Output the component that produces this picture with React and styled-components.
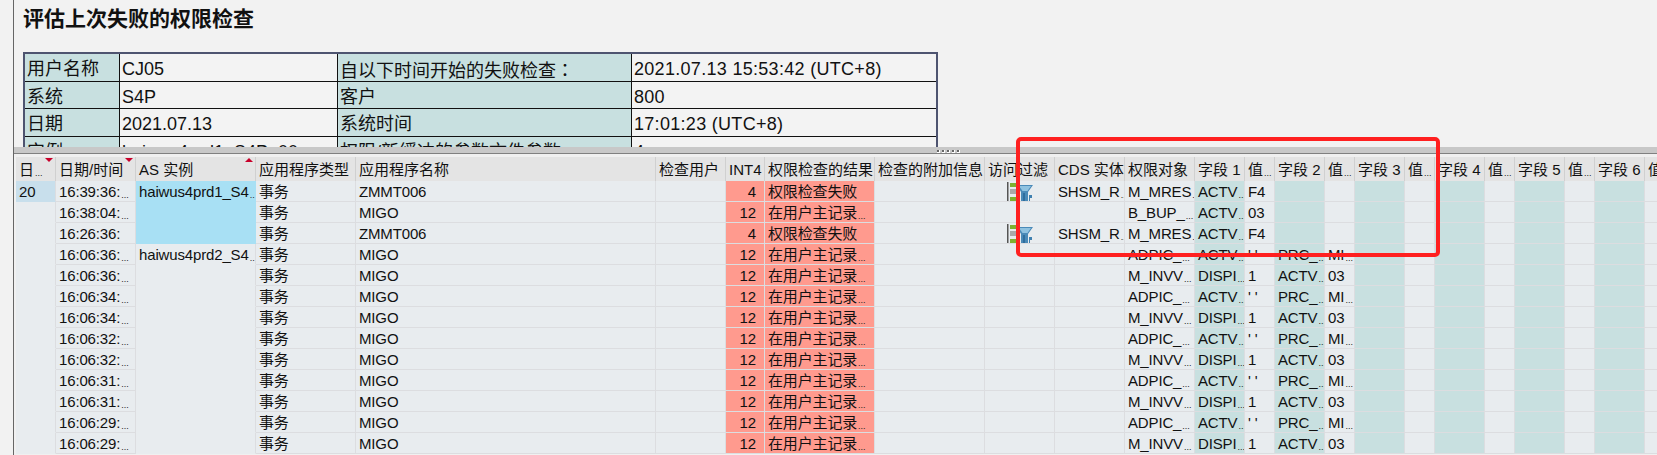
import React from 'react';
import styled, { createGlobalStyle } from 'styled-components';

const Global = createGlobalStyle`
  html, body { margin: 0; padding: 0; background: #f2f2f2; overflow: hidden; }
  body { font-family: "Liberation Sans", "Noto Sans CJK SC", sans-serif; color: #111; }
`;

const Page = styled.div`
  position: relative;
  width: 1657px;
  height: 455px;
  overflow: hidden;
  background: #f2f2f2;
  padding-left: 13px;
  box-sizing: border-box;
`;
const Frame = styled.div`
  height: 100%;
  border-left: 1px solid #666;
  display: flex;
  flex-direction: column;
`;
const TopPanel = styled.section`
  height: 147px;
  flex: none;
  overflow: hidden;
  padding-left: 9px;
`;
const Title = styled.h1`
  margin: 0;
  height: 52px;
  padding-top: 5px;
  box-sizing: border-box;
  font-size: 21px;
  line-height: 27px;
  font-weight: 700;
  color: #111;
`;
const InfoGrid = styled.div`
  display: grid;
  width: 915px;
  box-sizing: border-box;
  grid-template-columns: 95px 218px 294px 304px;
  grid-auto-rows: 27.5px;
  border: 2px solid #4e5470;
  border-bottom: 0;
`;
const InfoCell = styled.div`
  background: ${p => (p.$label ? '#c8e0e0' : '#f3f3f3')};
  border-bottom: 1px solid #111;
  border-right: ${p => (p.$last ? 0 : '1px solid #111')};
  padding: 3px 0 0 2px;
  box-sizing: border-box;
  font-size: 18px;
  line-height: 25px;
  letter-spacing: ${p => (p.$last ? '0.3px' : '0')};
  white-space: nowrap;
  overflow: hidden;
`;
const WideColon = styled.span`
  font-family: "Noto Sans CJK TC", sans-serif;
`;
const Splitter = styled.div`
  position: relative;
  flex: none;
  height: 6px;
  background: #c8c8c8;
  border-bottom: 1px solid #808080;
`;
const Grip = styled.div`
  position: absolute;
  left: 923px;
  top: 3px;
  display: flex;
  gap: 2px;
`;
const GripDot = styled.i`
  width: 2px;
  height: 2px;
  background: #666;
  border-right: 1px solid #fff;
  border-bottom: 1px solid #fff;
`;
const TableWrap = styled.section`
  flex: 1;
  overflow: hidden;
  padding: 3px 0 0 2px;
  background: #f0f0f0;
`;
const Table = styled.div`
  display: grid;
  grid-template-columns: 40px 80px 120px 100px 300px 70px 39px 110px 110px 70px 70px 70px 50px 30px 50px 30px 50px 30px 50px 30px 50px 30px 50px 30px 30px;
  grid-template-rows: 24px;
  grid-auto-rows: 21px;
  background: #e8ecef;
  width: max-content;
`;
const Head = styled.div`
  position: relative;
  background: #e4e4e4;
  border-right: 1px solid #d0d0d0;
  padding-left: 3px;
  font-size: 15px;
  line-height: 26px;
  white-space: nowrap;
  overflow: hidden;
  box-sizing: border-box;
`;
const Sort = styled.i`
  position: absolute;
  top: 1px;
  right: 2px;
  width: 0;
  height: 0;
  border-left: 4px solid transparent;
  border-right: 4px solid transparent;
  ${p => (p.$up ? 'border-bottom: 4px solid #c8002a;' : 'border-top: 4px solid #c8002a;')}
`;
const tones = { plain: '#e8ecef', pink: '#ff9a8e', teal: '#c8e0e0', sky: '#a8e0f4', pale: '#c8dfec' };
const Cell = styled.div`
  background: ${p => tones[p.$tone || 'plain']};
  border-right: 1px solid ${p => (p.$tone === 'sky' ? '#a8e0f4' : '#dcdde0')};
  border-bottom: 1px solid ${p => (p.$open ? 'transparent' : '#dcdde0')};
  padding: 0 ${p => (p.$right ? '8px' : '0')} 0 3px;
  text-align: ${p => (p.$right ? 'right' : 'left')};
  font-size: 15px;
  line-height: 21px;
  letter-spacing: -0.15px;
  white-space: nowrap;
  overflow: hidden;
  box-sizing: border-box;
`;
const Dots = styled.span`
  position: relative;
  top: 1px;
  margin-left: 1px;
  font-size: 9px;
  letter-spacing: 0;
  color: #222;
`;
const IconCell = styled(Cell)`
  display: flex;
  justify-content: center;
  align-items: flex-start;
  padding: 1px 0 0;
`;
const Annotation = styled.div`
  position: absolute;
  left: 1016px;
  top: 137px;
  width: 424px;
  height: 120px;
  box-sizing: border-box;
  border: 4px solid #ff2020;
  border-radius: 5px;
  pointer-events: none;
`;

const FilterIcon = () => (
  <svg width="26" height="20" viewBox="0 0 26 20">
    <rect x="0" y="0" width="1.5" height="20" fill="#555" />
    <rect x="3" y="1" width="9" height="4" fill="#7fb02f" />
    <rect x="3" y="7" width="8" height="5" fill="#a9a9a9" />
    <rect x="3" y="15" width="9" height="4" fill="#7fb02f" />
    <path d="M10 3H26L21 10V20H14V10Z" fill="#4a8ab8" />
    <path d="M12 4H24L20.5 9H15.5Z" fill="#8fc2e0" />
    <rect x="16" y="11" width="2" height="8" fill="#2f6e9e" />
    <path d="M22 13H25V16H23V19H22Z" fill="#3f80b0" />
  </svg>
);

const T = ({ tone, open, right, text, more }) => (
  <Cell $tone={tone} $open={open} $right={right}>
    {text}
    {more && <Dots>...</Dots>}
  </Cell>
);

const heads = [
  ['日', 'down', true], ['日期/时间', 'down'], ['AS 实例', 'up'], ['应用程序类型'], ['应用程序名称'], ['检查用户'], ['INT4'],
  ['权限检查的结果'], ['检查的附加信息'], ['访问过滤'], ['CDS 实体'], ['权限对象'],
  ['字段 1'], ['值', null, true], ['字段 2'], ['值', null, true], ['字段 3'], ['值', null, true],
  ['字段 4'], ['值', null, true], ['字段 5'], ['值', null, true], ['字段 6'], ['值', null, true], ['值', null, true],
];

const fail = { code: 4, result: '权限检查失败', more: false };
const rec = { code: 12, result: '在用户主记录', more: true };

const rows = [
  { date: '20', time: '16:39:36:', as: 'haiwus4prd1_S4', asTone: 'sky', type: 'ZMMT006', ...fail, icon: true, cds: 'SHSM_R', obj: 'M_MRES', f1: 'ACTV', v1: 'F4' },
  { time: '16:38:04:', asTone: 'sky', type: 'MIGO', ...rec, obj: 'B_BUP_', f1: 'ACTV', v1: '03' },
  { time: '16:26:36:', asTone: 'sky', type: 'ZMMT006', ...fail, icon: true, cds: 'SHSM_R', obj: 'M_MRES', f1: 'ACTV', v1: 'F4' },
  { time: '16:06:36:', as: 'haiwus4prd2_S4', type: 'MIGO', ...rec, obj: 'ADPIC_', f1: 'ACTV', v1: "' '", f2: 'PRC_', v2: 'MI' },
  ...['36', '34', '34', '32', '32', '31', '31', '29', '29'].map((s, i) => (
    i % 2 === 0
      ? { time: `16:06:${s}:`, type: 'MIGO', ...rec, obj: 'M_INVV', f1: 'DISPI', v1: '1', f2: 'ACTV', v2: '03' }
      : { time: `16:06:${s}:`, type: 'MIGO', ...rec, obj: 'ADPIC_', f1: 'ACTV', v1: "' '", f2: 'PRC_', v2: 'MI' }
  )),
];

const info = [
  ['用户名称', 'CJ05', <>自以下时间开始的失败检查<WideColon>：</WideColon></>, '2021.07.13 15:53:42 (UTC+8)'],
  ['系统', 'S4P', '客户', '800'],
  ['日期', '2021.07.13', '系统时间', '17:01:23 (UTC+8)'],
  ['实例', 'haiwus4prd1_S4P_00', '权限/新缓冲的参数文件参数', '4'],
];

export default function App() {
  return (
    <Page>
      <Global />
      <Frame>
        <TopPanel>
          <Title>评估上次失败的权限检查</Title>
          <InfoGrid>
            {info.map(r => (
              <React.Fragment key={r[0]}>
                <InfoCell $label>{r[0]}</InfoCell>
                <InfoCell>{r[1]}</InfoCell>
                <InfoCell $label>{r[2]}</InfoCell>
                <InfoCell $last>{r[3]}</InfoCell>
              </React.Fragment>
            ))}
          </InfoGrid>
        </TopPanel>
        <Splitter>
          <Grip>{[0, 1, 2, 3, 4].map(i => <GripDot key={i} />)}</Grip>
        </Splitter>
        <TableWrap>
          <Table>
            {heads.map(([label, sort, more], i) => (
              <Head key={i}>
                {label}
                {sort && <Sort $up={sort === 'up'} />}
                {more && <Dots>...</Dots>}
              </Head>
            ))}
            {rows.map((r, i) => (
              <React.Fragment key={i}>
                <T tone={r.date ? 'pale' : undefined} open text={r.date} />
                <T text={r.time} more={i !== 2} />
                <T tone={r.asTone} open text={r.as} more={!!r.as} />
                <T text="事务" />
                <T text={r.type} />
                <T />
                <T tone="pink" right text={r.code} />
                <T tone="pink" text={r.result} more={r.more} />
                <T />
                {r.icon ? <IconCell><FilterIcon /></IconCell> : <T />}
                <T text={r.cds} more={!!r.cds} />
                <T text={r.obj} more />
                <T tone="teal" text={r.f1} more />
                <T text={r.v1} />
                <T tone="teal" text={r.f2} more={!!r.f2} />
                <T text={r.v2} more={r.v2 === 'MI'} />
                <T tone="teal" />
                <T />
                <T tone="teal" />
                <T />
                <T tone="teal" />
                <T />
                <T tone="teal" />
                <T />
                <T />
              </React.Fragment>
            ))}
          </Table>
        </TableWrap>
      </Frame>
      <Annotation />
    </Page>
  );
}
